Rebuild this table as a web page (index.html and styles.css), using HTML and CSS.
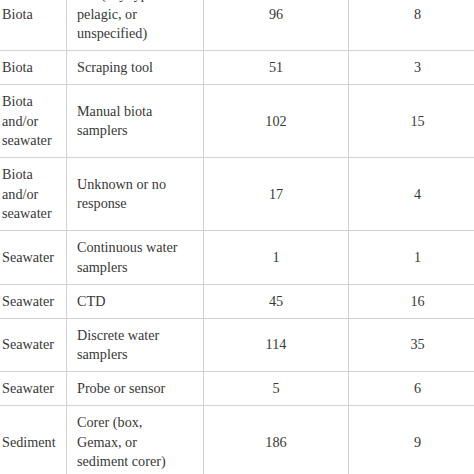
FILE: index.html
```html
<!DOCTYPE html>
<html lang="en">
<head>
<meta charset="utf-8">
<title>Sampling equipment</title>
<link rel="stylesheet" href="styles.css">
</head>
<body>
<table class="data">
  <colgroup>
    <col class="c-matrix">
    <col class="c-tool">
    <col class="c-num">
    <col class="c-num2">
  </colgroup>
  <tbody>
    <tr><td class="matrix">Biota</td><td class="tool">Net (any type: pelagic, or unspecified)</td><td class="num">96</td><td class="num">8</td></tr>
    <tr><td class="matrix">Biota</td><td class="tool">Scraping tool</td><td class="num">51</td><td class="num">3</td></tr>
    <tr><td class="matrix">Biota and/or seawater</td><td class="tool">Manual biota samplers</td><td class="num">102</td><td class="num">15</td></tr>
    <tr><td class="matrix">Biota and/or seawater</td><td class="tool">Unknown or no response</td><td class="num">17</td><td class="num">4</td></tr>
    <tr><td class="matrix">Seawater</td><td class="tool">Continuous water samplers</td><td class="num">1</td><td class="num">1</td></tr>
    <tr><td class="matrix">Seawater</td><td class="tool">CTD</td><td class="num">45</td><td class="num">16</td></tr>
    <tr><td class="matrix">Seawater</td><td class="tool">Discrete water samplers</td><td class="num">114</td><td class="num">35</td></tr>
    <tr><td class="matrix">Seawater</td><td class="tool">Probe or sensor</td><td class="num">5</td><td class="num">6</td></tr>
    <tr><td class="matrix">Sediment</td><td class="tool">Corer (box, Gemax, or sediment corer)</td><td class="num">186</td><td class="num">9</td></tr>
  </tbody>
</table>
</body>
</html>
```

FILE: styles.css
```css
html, body {
  margin: 0;
  padding: 0;
  background: #ffffff;
  overflow: hidden;
}

.data {
  border-collapse: collapse;
  table-layout: fixed;
  width: 495px;
  margin-top: -23px;
  margin-left: -9px;
  font-family: "Liberation Serif", "Times New Roman", serif;
  font-size: 14.2px;
  line-height: 19.5px;
  color: #383838;
}

.c-matrix { width: 75px; }
.c-tool { width: 137px; }
.c-num { width: 145px; }
.c-num2 { width: 138px; }

.data td {
  border: 1px solid #d2d2d2;
  padding: 7px 6px 6.5px 10px;
  vertical-align: middle;
  text-align: left;
}

.data td.tool {
  padding-right: 23px;
}

.data td.num {
  text-align: center;
  padding-left: 0;
  padding-right: 0;
}
```
